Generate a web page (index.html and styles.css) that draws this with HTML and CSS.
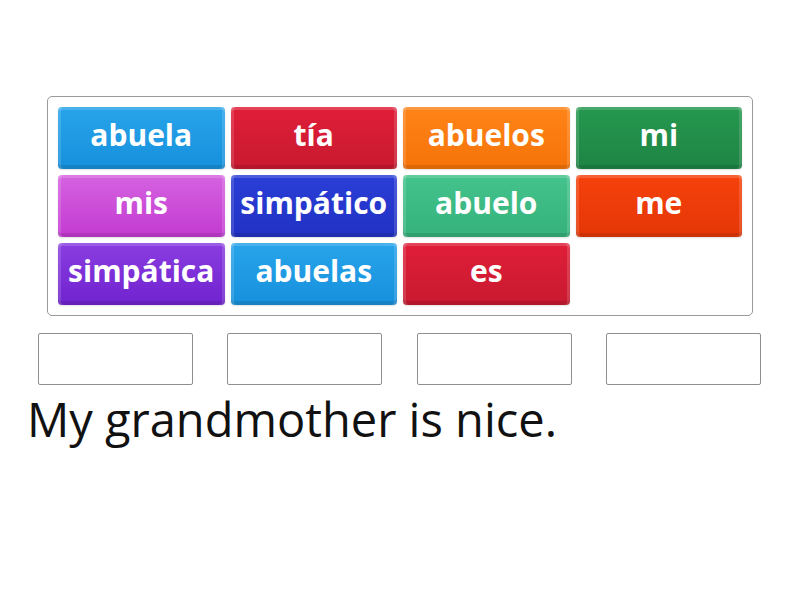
FILE: index.html
```html
<!DOCTYPE html>
<html lang="es">
<head>
<meta charset="utf-8">
<title>Unjumble</title>
<link rel="stylesheet" href="styles.css">
</head>
<body>
<main class="page">
  <section class="bank">
    <div class="tile c-blue">abuela</div>
    <div class="tile c-red">tía</div>
    <div class="tile c-orange">abuelos</div>
    <div class="tile c-green">mi</div>
    <div class="tile c-pink">mis</div>
    <div class="tile c-navy">simpático</div>
    <div class="tile c-mint">abuelo</div>
    <div class="tile c-vermil">me</div>
    <div class="tile c-purple">simpática</div>
    <div class="tile c-blue">abuelas</div>
    <div class="tile c-red">es</div>
  </section>
  <section class="slots">
    <div class="slot"></div>
    <div class="slot"></div>
    <div class="slot"></div>
    <div class="slot"></div>
  </section>
  <p class="sentence">My grandmother is nice.</p>
</main>
</body>
</html>
```
FILE: styles.css
```css
html, body {
  margin: 0;
  padding: 0;
  background: #fff;
}
body {
  font-family: "Open Sans", "Noto Sans", sans-serif;
  width: 800px;
  height: 600px;
  overflow: hidden;
}
.page {
  padding-top: 96px;
}
.bank {
  margin-left: 47px;
  width: 684px;
  border: 1px solid #9a9a9a;
  border-radius: 5px;
  padding: 10px;
  display: grid;
  grid-template-columns: repeat(4, 1fr);
  grid-auto-rows: 62px;
  gap: 6px;
  min-height: 198px;
}
.tile {
  border-radius: 4px;
  color: #fff;
  font-weight: 700;
  font-size: 30px;
  display: flex;
  align-items: center;
  justify-content: center;
  padding-bottom: 7px;
  box-sizing: border-box;
  white-space: nowrap;
  box-shadow:
    inset 0 3px 0 rgba(255,255,255,0.16),
    inset 3px 0 0 rgba(255,255,255,0.14),
    inset -3px 0 0 rgba(255,255,255,0.14),
    inset 0 -4px 0 rgba(0,0,0,0.10),
    0 1px 2px rgba(0,0,0,0.12);
}
.c-blue { background: linear-gradient(#27a4ea, #1790dc); }
.c-red { background: linear-gradient(#e01e38, #c81a30); }
.c-orange { background: linear-gradient(#ff8418, #f57308); }
.c-green { background: linear-gradient(#26984f, #1e8444); }
.c-pink { background: linear-gradient(#d563e0, #c33ad1); }
.c-navy { background: linear-gradient(#2a3ed6, #2131c4); }
.c-mint { background: linear-gradient(#45c38c, #35b27b); }
.c-vermil { background: linear-gradient(#f6420c, #e43606); }
.c-purple { background: linear-gradient(#8a3de0, #7023cf); }

.slots {
  margin: 17px 39px 0 38px;
  display: flex;
  justify-content: space-between;
}
.slot {
  width: 155px;
  height: 52px;
  box-sizing: border-box;
  border: 1px solid #8f8f8f;
  border-radius: 2px;
  background: #fff;
}
.sentence {
  margin: 2px 0 0 27px;
  font-size: 47px;
  line-height: 1.362;
  color: #111;
  font-weight: 400;
}
```
